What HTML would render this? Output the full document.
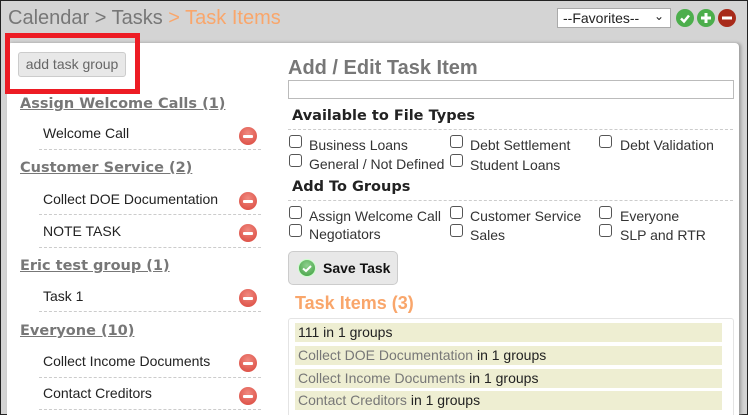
<!DOCTYPE html>
<html><head><style>
*{margin:0;padding:0;box-sizing:border-box}
html{overflow:hidden;width:748px;height:415px}
body{width:748px;height:415px;overflow:hidden;background:#d4d4d4;font-family:"Liberation Sans",sans-serif;position:relative;border:1px solid #222;}
.a{position:absolute;white-space:nowrap}
.panel{position:absolute;left:6px;top:42px;width:732px;height:372px;background:#fff;border-radius:4px 4px 0 0;box-shadow:2px 0 3px #999}
.gh{font-family:"DejaVu Sans",sans-serif;font-weight:bold;font-size:14.5px;color:#777;text-decoration:underline;left:19px}
.it{font-size:14px;color:#222;left:42px}
.ds{position:absolute;left:38px;width:222px;border-top:1px dashed #ccc}
.rm{position:absolute;left:238px;width:18px;height:18px;border-radius:50%;background:radial-gradient(circle at 50% 35%,#f08a80,#d9443a)}
.rm:after{content:"";position:absolute;left:4px;top:7.5px;width:10px;height:3px;background:#fff;border-radius:1px}
.cb{position:absolute;width:13px;height:13px;border:1px solid #555;border-radius:3px;background:#fff}
.lb{font-size:14px;color:#333}
.sh{font-family:"DejaVu Sans",sans-serif;font-weight:bold;font-size:14.5px;color:#222;left:291px}
.dl{position:absolute;left:287px;width:445px;border-top:1px dashed #ccc}
.row{position:absolute;left:294px;width:427px;height:19px;background:#eeeed2;font-size:14px;color:#222;padding-left:3px;line-height:19px}
.row span{color:#777}
</style></head><body>
<div class="a" style="left:7px;top:6px;font-size:20px;color:#777">Calendar &gt; Tasks <span style="color:#f9a66b">&gt; Task Items</span></div>
<div class="a" style="left:556px;top:7px;width:114px;height:20px;background:#fff;border:1px solid #aaa;font-size:14px;color:#222;padding:1px 0 0 5px">--Favorites--<span style="position:absolute;right:6px;top:0;font-size:12px">&#x2304;</span></div>
<div class="a" style="left:675px;top:8px;width:18px;height:18px;border-radius:50%;background:#4cae4c"><svg width="18" height="18"><path d="M5 9.5l3 3 5-6" stroke="#fff" stroke-width="2.5" fill="none"/></svg></div>
<div class="a" style="left:696px;top:8px;width:18px;height:18px;border-radius:50%;background:#4cae4c"><svg width="18" height="18"><path d="M9 4v10M4 9h10" stroke="#fff" stroke-width="3"/></svg></div>
<div class="a" style="left:717px;top:8px;width:18px;height:18px;border-radius:50%;background:#a82a1a"><svg width="18" height="18"><path d="M4 9h10" stroke="#fff" stroke-width="3"/></svg></div>
<div class="panel"></div>
<div class="a" style="left:4px;top:32px;width:135px;height:61px;border:5px solid #ed1c24"></div>
<div class="a" style="left:17px;top:51px;width:108px;height:25px;border:1px solid #ccc;border-radius:3px;background:#e8e8e8;font-size:14px;color:#666;text-align:center;line-height:23px">add task group</div>
<div class="a gh" style="top:95px">Assign Welcome Calls (1)</div>
<div class="a it" style="top:124px">Welcome Call</div><div class="rm" style="top:126px"></div><div class="ds" style="top:148px"></div>
<div class="a gh" style="top:159px">Customer Service (2)</div>
<div class="a it" style="top:190px">Collect DOE Documentation</div><div class="rm" style="top:191px"></div><div class="ds" style="top:213px"></div>
<div class="a it" style="top:222px">NOTE TASK</div><div class="rm" style="top:223px"></div><div class="ds" style="top:246px"></div>
<div class="a gh" style="top:257px">Eric test group (1)</div>
<div class="a it" style="top:287px">Task 1</div><div class="rm" style="top:288px"></div><div class="ds" style="top:310px"></div>
<div class="a gh" style="top:322px">Everyone (10)</div>
<div class="a it" style="top:352px">Collect Income Documents</div><div class="rm" style="top:353px"></div><div class="ds" style="top:376px"></div>
<div class="a it" style="top:384px">Contact Creditors</div><div class="rm" style="top:386px"></div><div class="ds" style="top:408px"></div>

<div class="a" style="left:287px;top:56px;font-size:20px;font-weight:bold;color:#777">Add / Edit Task Item</div>
<div class="a" style="left:287px;top:79px;width:446px;height:19px;border:1px solid #bbb;background:#fff"></div>
<div class="a sh" style="top:107px">Available to File Types</div>
<div class="dl" style="top:128px"></div>
<div class="cb" style="left:288px;top:134px"></div><div class="a lb" style="left:308px;top:136px">Business Loans</div>
<div class="cb" style="left:449px;top:134px"></div><div class="a lb" style="left:469px;top:136px">Debt Settlement</div>
<div class="cb" style="left:598px;top:134px"></div><div class="a lb" style="left:619px;top:136px">Debt Validation</div>
<div class="cb" style="left:288px;top:153px"></div><div class="a lb" style="left:308px;top:155px">General / Not Defined</div>
<div class="cb" style="left:449px;top:153px"></div><div class="a lb" style="left:469px;top:156px">Student Loans</div>
<div class="a sh" style="top:178px">Add To Groups</div>
<div class="dl" style="top:199px"></div>
<div class="cb" style="left:288px;top:205px"></div><div class="a lb" style="left:308px;top:207px">Assign Welcome Call</div>
<div class="cb" style="left:449px;top:205px"></div><div class="a lb" style="left:469px;top:207px">Customer Service</div>
<div class="cb" style="left:598px;top:205px"></div><div class="a lb" style="left:619px;top:207px">Everyone</div>
<div class="cb" style="left:288px;top:223px"></div><div class="a lb" style="left:308px;top:225px">Negotiators</div>
<div class="cb" style="left:449px;top:223px"></div><div class="a lb" style="left:469px;top:226px">Sales</div>
<div class="cb" style="left:598px;top:223px"></div><div class="a lb" style="left:619px;top:226px">SLP and RTR</div>
<div class="a" style="left:287px;top:250px;width:110px;height:34px;border:1px solid #ccc;border-radius:5px;background:#e8e8e8"></div>
<div class="a" style="left:297px;top:258px;width:18px;height:18px;border-radius:50%;background:radial-gradient(circle at 50% 35%,#8fd08f,#3e9e3e);border:1px solid #cfc"><svg width="16" height="16"><path d="M4 8.5l3 2.5 5-5" stroke="#fff" stroke-width="2" fill="none"/></svg></div>
<div class="a" style="left:322px;top:259px;font-size:14px;font-weight:bold;color:#111">Save Task</div>
<div class="a" style="left:294px;top:292px;font-size:18px;font-weight:bold;color:#f9a66b">Task Items (3)</div>
<div class="a" style="left:287px;top:317px;width:446px;height:110px;border:1px solid #e4e4e4;border-radius:3px;background:#fff"></div>
<div class="row" style="top:322px">111 in 1 groups</div>
<div class="row" style="top:345px"><span>Collect DOE Documentation</span> in 1 groups</div>
<div class="row" style="top:368px"><span>Collect Income Documents</span> in 1 groups</div>
<div class="row" style="top:390px"><span>Contact Creditors</span> in 1 groups</div>
</body></html>
